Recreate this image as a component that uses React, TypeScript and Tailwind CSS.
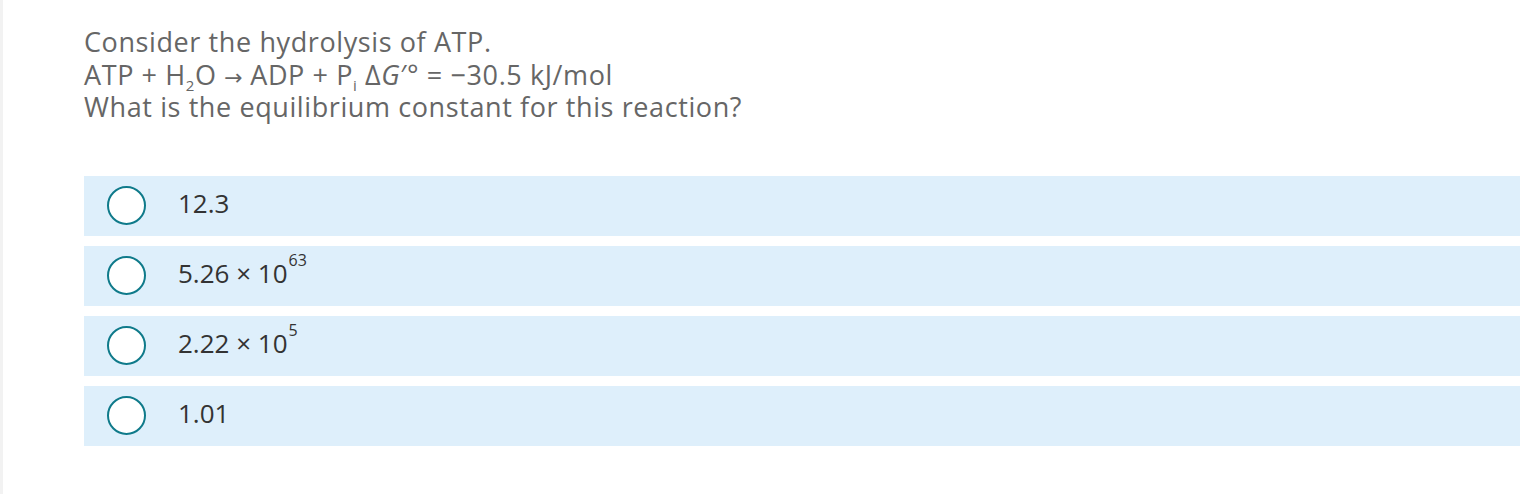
import React from "react";

type Option = { base: string; exp?: string };

const options: Option[] = [
  { base: "12.3" },
  { base: "5.26 × 10", exp: "63" },
  { base: "2.22 × 10", exp: "5" },
  { base: "1.01" },
];

function Radio() {
  return (
    <span className="block h-[39px] w-[39px] shrink-0 rounded-full border-2 border-[#0f7a8a] bg-white" />
  );
}

export default function App() {
  return (
    <div
      className="flex min-h-[494px] w-full bg-white"
      style={{ fontFamily: "'Open Sans', 'Noto Sans', sans-serif" }}
    >
      <div className="w-[3px] shrink-0 bg-[#f2f2f2]" />
      <div className="flex-1 pl-[81px] pr-[12px] pt-[26px]">
        {/* Question */}
        <div className="text-[27px] leading-[32.5px] tracking-[0.6px] text-[#666666]">
          <p>Consider the hydrolysis of ATP.</p>
          <p className="h-[32.5px]">
            ATP + H<sub className="text-[15px] align-[-3px] leading-none">2</sub>O{" "}
            <span
              className="text-[22px] leading-none tracking-normal"
              style={{ fontFamily: "'DejaVu Sans', sans-serif" }}
            >
              →
            </span>{" "}
            ADP + P<sub className="text-[15px] align-[-3px] leading-none">i</sub> Δ<i>G</i>′° = −30.5 kJ/mol
          </p>
          <p>What is the equilibrium constant for this reaction?</p>
        </div>

        {/* Answer choices */}
        <div className="mt-[52px] flex flex-col gap-[10px]">
          {options.map((opt) => (
            <label
              key={opt.base + (opt.exp ?? "")}
              className="flex h-[60px] cursor-pointer items-center bg-[#deeffb] pl-[23px]"
            >
              <Radio />
              <span className="ml-[32px] pb-[4px] text-[26px] text-[#333333]">
                {opt.base}
                {opt.exp && (
                  <sup className="ml-[1px] text-[16px] align-[9px] leading-none">{opt.exp}</sup>
                )}
              </span>
            </label>
          ))}
        </div>
      </div>
    </div>
  );
}
